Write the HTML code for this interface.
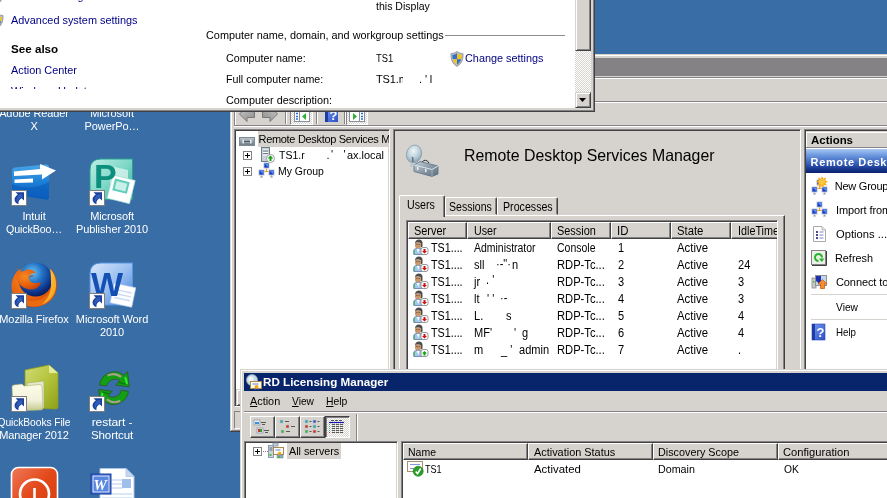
<!DOCTYPE html>
<html lang="en">
<head>
<meta charset="utf-8">
<title>Remote Desktop Services Manager</title>
<style>
html,body{margin:0;padding:0}
body{width:887px;height:498px;overflow:hidden;position:relative;background:#396da5;font-family:"Liberation Sans",sans-serif;font-size:11px;line-height:13px;color:#000;letter-spacing:-0.1px}
div,span,svg{position:absolute;box-sizing:border-box}
#root{left:0;top:0;width:887px;height:498px;overflow:hidden;will-change:transform}
svg{overflow:visible}
.t{white-space:nowrap;height:13px;transform-origin:0 0}
.b{font-weight:bold}
.lk{color:#000084}
.w{color:#fff}
.ms{font-size:12px;letter-spacing:0;transform:scaleX(.92)}
.lbl{color:#fff;text-align:center;width:90px;white-space:nowrap;height:13px;transform-origin:50% 0}
.btn{background:#d6d3ce;border:1px solid;border-color:#fff #424142 #424142 #fff;box-shadow:inset -1px -1px 0 #848284}
.sbtn{background:#d6d3ce;border:1px solid;border-color:#d6d3ce #424142 #424142 #d6d3ce;box-shadow:inset 1px 1px 0 #fff,inset -1px -1px 0 #848284}
.sunk{border:1px solid;border-color:#848284 #fff #fff #848284;box-shadow:inset 1px 1px 0 #424142,inset -1px -1px 0 #d6d3ce}
.hd{background:#d6d3ce;border:1px solid;border-color:#fff #424142 #424142 #fff;box-shadow:inset -1px -1px 0 #848284}
.plus{width:9px;height:9px;border:1px solid #848284;background:#fff}
.plus:before{content:"";position:absolute;left:1px;top:3px;width:5px;height:1px;background:#000}
.plus:after{content:"";position:absolute;left:3px;top:1px;width:1px;height:5px;background:#000}
</style>
</head>
<body>
<div id="root">
<div class="lbl" style="left:-11px;top:107px">Adobe Reader</div>
<div class="lbl" style="left:-11px;top:120px">X</div>
<div class="lbl" style="left:67px;top:107px">Microsoft</div>
<div class="lbl" style="left:67px;top:120px">PowerPo…</div>
<svg style="left:10px;top:158px" width="48" height="48" viewBox="0 0 48 48">
<defs><linearGradient id="iq" x1="0" y1="0" x2="0" y2="1"><stop offset="0" stop-color="#4aa6e8"/><stop offset=".5" stop-color="#1d7fd6"/><stop offset="1" stop-color="#0a55b0"/></linearGradient></defs>
<path d="M2 13Q2 10 5 9.5L36 6.5Q39 6.5 39 9.5V39Q39 42 36 41.5L5 36.5Q2 36 2 33z" fill="url(#iq)"/>
<path d="M2 26Q20 34 39 24V39Q39 42 36 41.5L5 36.5Q2 36 2 33z" fill="#0b5fc0" opacity=".7"/>
<path d="M4 13.5L30 11V6L46 12.5L32 21.5V16.5L4 18z" fill="#fff"/>
<path d="M4.5 21.5L23 20.5V24.5L4.5 25z" fill="#fff"/>
</svg>
<svg style="left:11px;top:190px" width="16" height="16" viewBox="0 0 16 16"><rect x=".5" y=".5" width="15" height="15" fill="#fff" stroke="#7f7f7f"/><path d="M4.500 2.300H13V10.500L10.700 8.200C8.500 9.500 7 11 7.500 14C4.500 13.500 2.500 10 4 7.500C4.800 6.200 5.800 5.400 6.800 4.600z" fill="#1c3f98"/><path d="M8 4.500L11.500 4V7.500C9 8 6.500 10 6 12.500C4.500 10 6 6.500 8 4.500z" fill="#2f5cb8"/><path d="M3.200 8.500C2.800 10.500 3.800 12.500 5.500 13.500" stroke="#c8daf4" stroke-width=".8" fill="none"/></svg><div class="lbl" style="left:-11px;top:210px">Intuit</div>
<div class="lbl" style="left:-11px;top:223px;transform:scaleX(0.97)">QuickBoo…</div>
<svg style="left:88px;top:158px" width="48" height="48" viewBox="0 0 48 48">
<defs><linearGradient id="pb" x1="0" y1="0" x2="1" y2="1"><stop offset="0" stop-color="#bfeee4"/><stop offset=".5" stop-color="#7fd8c8"/><stop offset="1" stop-color="#2fae9a"/></linearGradient></defs>
<path d="M2 12Q2 1 13 1H44.5V41.5H2z" fill="url(#pb)" stroke="#28a090" stroke-width="1"/>
<path d="M22 8L40 12V30L22 30z" fill="#d8f4ee" opacity=".8"/>
<g transform="rotate(14 32 30)"><rect x="22" y="19" width="23" height="24" fill="#fff" stroke="#9adccf" stroke-width=".6"/><rect x="25" y="22" width="15" height="12" fill="#5fcdb9"/><rect x="27" y="24" width="11" height="8" fill="#c9f1ea"/></g>
<text x="6" y="30" font-family="Liberation Sans,sans-serif" font-weight="bold" font-size="34" fill="#0c8f7c" letter-spacing="0">P</text>
</svg>
<svg style="left:89px;top:190px" width="16" height="16" viewBox="0 0 16 16"><rect x=".5" y=".5" width="15" height="15" fill="#fff" stroke="#7f7f7f"/><path d="M4.500 2.300H13V10.500L10.700 8.200C8.500 9.500 7 11 7.500 14C4.500 13.500 2.500 10 4 7.500C4.800 6.200 5.800 5.400 6.800 4.600z" fill="#1c3f98"/><path d="M8 4.500L11.500 4V7.500C9 8 6.500 10 6 12.500C4.500 10 6 6.500 8 4.500z" fill="#2f5cb8"/><path d="M3.200 8.500C2.800 10.500 3.800 12.500 5.500 13.500" stroke="#c8daf4" stroke-width=".8" fill="none"/></svg><div class="lbl" style="left:67px;top:210px">Microsoft</div>
<div class="lbl" style="left:67px;top:223px">Publisher 2010</div>
<svg style="left:10px;top:261px" width="48" height="48" viewBox="0 0 48 48">
<defs><radialGradient id="fg" cx=".4" cy=".3" r=".75"><stop offset="0" stop-color="#6fc4f0"/><stop offset=".4" stop-color="#2374c8"/><stop offset=".8" stop-color="#0c2f86"/><stop offset="1" stop-color="#08184c"/></radialGradient>
<radialGradient id="ff" cx=".35" cy=".35" r=".8"><stop offset="0" stop-color="#f58a24"/><stop offset=".55" stop-color="#e8600c"/><stop offset="1" stop-color="#c43c08"/></radialGradient>
<linearGradient id="fy" x1="0" y1="0" x2="1" y2="1"><stop offset="0" stop-color="#fbd848"/><stop offset="1" stop-color="#f49a18"/></linearGradient></defs>
<path d="M5.500 5.500C7 8 8 8.500 9.500 8C5 12 1.500 18 1.500 25C1.500 37 11 46 24 46C37 46 47 36.500 47 24C47 17 44.500 11 40 7.500C42 12 42 15 41 18C38 10 31 4 24 4C18 4 13 6 10 9.500C8 9 6.500 7.500 5.500 5.500z" fill="url(#ff)"/>
<circle cx="25.500" cy="18.500" r="17" fill="url(#fg)"/>
<path d="M8 10C11 11 13 10.500 15 9.500C19 7.500 24 9 25.500 12C22 12 19.500 13.500 19 16C18.500 19 20.500 21.500 24 22C27 22.500 29.500 21 31 21.500C29.500 26 25 29 20 28.500C13 28 7.500 23 6.500 17C6 14 6.500 12 8 10z" fill="url(#ff)"/>
<path d="M3 27C6 35 13 40 22 40C31 40 38 35 41.500 27C43 23 43 19 42 16C45 20 46.500 25 45.500 30C44 38 36 45.500 24 45.500C13 45.500 4.500 38 3 27z" fill="#ea6a10"/>
<path d="M40 8C44 12 46.500 18 46 25C45.500 33 40 40 32 43.500C38 38 41 31 41 24C41 18 41 13 40 8z" fill="url(#fy)"/>
<path d="M19 16.500C20 15 22 14.500 23.500 15" stroke="#7a2a04" stroke-width=".8" fill="none"/>
</svg>
<svg style="left:11px;top:293px" width="16" height="16" viewBox="0 0 16 16"><rect x=".5" y=".5" width="15" height="15" fill="#fff" stroke="#7f7f7f"/><path d="M4.500 2.300H13V10.500L10.700 8.200C8.500 9.500 7 11 7.500 14C4.500 13.500 2.500 10 4 7.500C4.800 6.200 5.800 5.400 6.800 4.600z" fill="#1c3f98"/><path d="M8 4.500L11.500 4V7.500C9 8 6.500 10 6 12.500C4.500 10 6 6.500 8 4.500z" fill="#2f5cb8"/><path d="M3.200 8.500C2.800 10.500 3.800 12.500 5.500 13.500" stroke="#c8daf4" stroke-width=".8" fill="none"/></svg><div class="lbl" style="left:-11px;top:313px">Mozilla Firefox</div>
<svg style="left:88px;top:261px" width="48" height="48" viewBox="0 0 48 48">
<defs><linearGradient id="wb" x1="0" y1="0" x2="1" y2="1"><stop offset="0" stop-color="#d6e6fa"/><stop offset=".5" stop-color="#9cc0f0"/><stop offset="1" stop-color="#3f7fdc"/></linearGradient></defs>
<path d="M2 13Q2 2 13 2H44.5V44H2z" fill="url(#wb)" stroke="#5a94e4" stroke-width="1"/>
<g transform="rotate(12 34 34)"><rect x="24" y="24" width="22" height="20" fill="#fff" stroke="#b7cff0" stroke-width=".6"/><path d="M27 30h16M27 34h16M27 38h16" stroke="#c9dbf4" stroke-width="1.4"/></g>
<text x="3" y="35" font-family="Liberation Sans,sans-serif" font-weight="bold" font-size="34" fill="#1450b4" letter-spacing="0">W</text>
</svg>
<svg style="left:89px;top:293px" width="16" height="16" viewBox="0 0 16 16"><rect x=".5" y=".5" width="15" height="15" fill="#fff" stroke="#7f7f7f"/><path d="M4.500 2.300H13V10.500L10.700 8.200C8.500 9.500 7 11 7.500 14C4.500 13.500 2.500 10 4 7.500C4.800 6.200 5.800 5.400 6.800 4.600z" fill="#1c3f98"/><path d="M8 4.500L11.500 4V7.500C9 8 6.500 10 6 12.500C4.500 10 6 6.500 8 4.500z" fill="#2f5cb8"/><path d="M3.200 8.500C2.800 10.500 3.800 12.500 5.500 13.500" stroke="#c8daf4" stroke-width=".8" fill="none"/></svg><div class="lbl" style="left:67px;top:313px">Microsoft Word</div>
<div class="lbl" style="left:67px;top:326px">2010</div>
<svg style="left:10px;top:364px" width="48" height="48" viewBox="0 0 48 48">
<defs><linearGradient id="qg" x1="0" y1="0" x2="1" y2="1"><stop offset="0" stop-color="#d2dc78"/><stop offset=".5" stop-color="#b4c43c"/><stop offset="1" stop-color="#8ea018"/></linearGradient>
<linearGradient id="qw" x1="0" y1="0" x2="0" y2="1"><stop offset="0" stop-color="#fbfbe8"/><stop offset=".6" stop-color="#f2f2dc"/><stop offset="1" stop-color="#bfc98a"/></linearGradient></defs>
<path d="M15 6L39 1L48 9V43Q48 45 46 45L17 44Q15 44 15 42z" fill="url(#qg)" stroke="#8c9c20" stroke-width=".8"/>
<path d="M39 1V9H48z" fill="#e4ec9c"/>
<path d="M17 19L34 17V44L19 45z" fill="#e6e9c8" stroke="#a0aa60" stroke-width=".6"/>
<path d="M2 23Q2 21 4 21L12 20L14 22L30 20.5Q32 20.5 32 23L33 44Q33 46 31 46L5 47Q3 47 3 45z" fill="url(#qw)" stroke="#aab070" stroke-width=".6"/>
</svg>
<svg style="left:11px;top:396px" width="16" height="16" viewBox="0 0 16 16"><rect x=".5" y=".5" width="15" height="15" fill="#fff" stroke="#7f7f7f"/><path d="M4.500 2.300H13V10.500L10.700 8.200C8.500 9.500 7 11 7.500 14C4.500 13.500 2.500 10 4 7.500C4.800 6.200 5.800 5.400 6.800 4.600z" fill="#1c3f98"/><path d="M8 4.500L11.500 4V7.500C9 8 6.500 10 6 12.500C4.500 10 6 6.500 8 4.500z" fill="#2f5cb8"/><path d="M3.200 8.500C2.800 10.500 3.800 12.500 5.500 13.500" stroke="#c8daf4" stroke-width=".8" fill="none"/></svg><div class="lbl" style="left:-11px;top:416px;transform:scaleX(0.935)">QuickBooks File</div>
<div class="lbl" style="left:-11px;top:429px">Manager 2012</div>
<svg style="left:88px;top:364px" width="48" height="48" viewBox="0 0 48 48">
<g transform="translate(3.500 3) scale(.9)">
<path d="M9 20C10 11 18 4.500 28 5.500C31 6 34 7.500 36 9.500L40 5L42 22L27 20L31.500 15C29 13 25 13 22 14.500C19 16 17.500 18.500 17 21z" fill="#12a012" stroke="#2c5c24" stroke-width="1"/>
<path d="M41 27C40 36 32 42.500 22 41.500C19 41 16 39.500 14 37.500L10 42L8 25L23 27L18.500 32C21 34 25 34 28 32.500C31 31 32.500 28.500 33 26z" fill="#12a012" stroke="#2c5c24" stroke-width="1"/>
<path d="M18 9.500C23 7 29 8 33 11" stroke="#a8a08c" stroke-width="2.400" fill="none"/><path d="M32 37.500C27 40 21 39 17 36" stroke="#a8a08c" stroke-width="2.400" fill="none"/>
<path d="M37.500 11L39.500 19" stroke="#38e838" stroke-width="2.200"/><path d="M12.500 28L10.500 36" stroke="#38e838" stroke-width="2.200"/>
<path d="M30 17L38 19" stroke="#0c780c" stroke-width="1.500"/><path d="M20 30L12 28" stroke="#0c780c" stroke-width="1.500"/>
</g></svg>
<svg style="left:89px;top:396px" width="16" height="16" viewBox="0 0 16 16"><rect x=".5" y=".5" width="15" height="15" fill="#fff" stroke="#7f7f7f"/><path d="M4.500 2.300H13V10.500L10.700 8.200C8.500 9.500 7 11 7.500 14C4.500 13.500 2.500 10 4 7.500C4.800 6.200 5.800 5.400 6.800 4.600z" fill="#1c3f98"/><path d="M8 4.500L11.500 4V7.500C9 8 6.500 10 6 12.500C4.500 10 6 6.500 8 4.500z" fill="#2f5cb8"/><path d="M3.200 8.500C2.800 10.500 3.800 12.500 5.500 13.500" stroke="#c8daf4" stroke-width=".8" fill="none"/></svg><div class="lbl" style="left:67px;top:416px;transform:scaleX(1.1)">restart -</div>
<div class="lbl" style="left:67px;top:429px;transform:scaleX(1.05)">Shortcut</div>
<svg style="left:10px;top:466px" width="50" height="40" viewBox="0 0 50 40">
<defs><linearGradient id="pw" x1="0" y1="0" x2="1" y2="1"><stop offset="0" stop-color="#f0785a"/><stop offset=".5" stop-color="#e24818"/><stop offset="1" stop-color="#d43c10"/></linearGradient></defs>
<rect x="1.5" y="1.5" width="46" height="46" rx="7" fill="url(#pw)" stroke="#fff" stroke-width="1.6"/>
<circle cx="24.500" cy="28" r="14.500" fill="none" stroke="#fff" stroke-width="2.6"/>
<path d="M24.500 22V36" stroke="#fff" stroke-width="2.6"/>
</svg>
<svg style="left:88px;top:466px" width="48" height="40" viewBox="0 0 48 40">
<path d="M12 2.500H38L46 10.500V40H12z" fill="#fff" stroke="#a9c4e8" stroke-width="1"/>
<path d="M38 2.500V10.500H46z" fill="#c4d8f0" stroke="#a9c4e8" stroke-width=".8"/>
<path d="M24 14h11M24 18h11M24 22h11M14 28h30M14 32h30" stroke="#b4cdee" stroke-width="1.2"/>
<rect x="34" y="13" width="9" height="9" fill="#9fc0ea"/>
<rect x="3" y="8" width="20" height="20" fill="#3a6ad0" stroke="#1e3fa0" stroke-width="1"/>
<rect x="5" y="10" width="16" height="16" fill="#5a88e0" stroke="#fff" stroke-width=".8"/>
<text x="5.500" y="24" font-family="Liberation Serif,serif" font-weight="bold" font-style="italic" font-size="15" fill="#fff" letter-spacing="0">W</text>
</svg>

<div style="left:230px;top:54px;width:700px;height:378px;background:#d6d3ce">
<div style="left:1px;top:1px;width:700px;height:1px;background:#fff"></div>
<div style="left:1px;top:1px;width:1px;height:376px;background:#fff"></div>
<div style="left:1px;top:376px;width:700px;height:1px;background:#848284"></div>
<div style="left:0px;top:377px;width:700px;height:1px;background:#424142"></div>
<div style="left:4px;top:4px;width:700px;height:18px;background:#848284"></div>
<div style="left:4px;top:23px;width:700px;height:1px;background:#848284"></div>
<div style="left:5px;top:24px;width:700px;height:1px;background:#fff"></div>
<div style="left:4px;top:23px;width:1px;height:49px;background:#848284"></div>
<div style="left:5px;top:24px;width:1px;height:47px;background:#fff"></div>
<div style="left:6px;top:47px;width:700px;height:1px;background:#848284"></div>
<div style="left:6px;top:48px;width:700px;height:1px;background:#fff"></div>
<div style="left:4px;top:71px;width:700px;height:1px;background:#848284"></div>
<div style="left:4px;top:72px;width:700px;height:1px;background:#fff"></div>
<svg style="left:9px;top:52px" width="16" height="16" viewBox="0 0 16 16"><defs><linearGradient id="ag" x1="0" y1="0" x2="1" y2="1"><stop offset="0" stop-color="#c8c8c8"/><stop offset="1" stop-color="#8c8c8c"/></linearGradient></defs><path d="M.5 8L8 .5V4.500H15.500V11.500H8V15.500z" fill="url(#ag)" stroke="#787878" stroke-width="1"/></svg>
<svg style="left:32px;top:52px" width="16" height="16" viewBox="0 0 16 16"><g transform="translate(16 0) scale(-1 1)"><defs><linearGradient id="ag2" x1="0" y1="0" x2="1" y2="1"><stop offset="0" stop-color="#c8c8c8"/><stop offset="1" stop-color="#8c8c8c"/></linearGradient></defs><path d="M.5 8L8 .5V4.500H15.500V11.500H8V15.500z" fill="url(#ag2)" stroke="#787878" stroke-width="1"/></g></svg>
<div style="left:55px;top:58px;width:1px;height:12px;background:#848284"></div>
<div style="left:56px;top:58px;width:1px;height:12px;background:#fff"></div>
<div style="left:60px;top:50px;width:23px;height:21px;background-color:#eae8e4;background-image:conic-gradient(#fff 25%,#d6d3ce 0 50%,#fff 0 75%,#d6d3ce 0);background-size:2px 2px;border:1px solid;border-color:#848284 #fff #fff #848284"></div>
<svg style="left:64px;top:54px" width="16" height="14" viewBox="0 0 16 14"><rect x=".5" y=".5" width="15" height="13" fill="#fff" stroke="#8890a0"/><rect x="1" y="1" width="14" height="2" fill="#a8b4cc"/><path d="M5.500 3v10" stroke="#8890a0"/><path d="M2 5.500h2M2 8.500h2M2 11h2" stroke="#2c6cd8" stroke-width="1.400"/><path d="M12 5v7L8 8.500z" fill="#30b030"/></svg>
<div style="left:86px;top:58px;width:1px;height:12px;background:#848284"></div>
<div style="left:87px;top:58px;width:1px;height:12px;background:#fff"></div>
<svg style="left:95px;top:53px" width="13" height="15" viewBox="0 0 13 15"><defs><linearGradient id="hg" x1="0" y1="0" x2="1" y2="1"><stop offset="0" stop-color="#7a9cf0"/><stop offset="1" stop-color="#2a50c8"/></linearGradient></defs><rect width="13" height="15" fill="url(#hg)"/><rect width="3" height="15" fill="#1c3ca8"/><text x="4.500" y="12.500" font-family="Liberation Sans,sans-serif" font-weight="bold" font-size="13" fill="#fff" letter-spacing="0">?</text></svg>
<div style="left:114px;top:58px;width:1px;height:12px;background:#848284"></div>
<div style="left:115px;top:58px;width:1px;height:12px;background:#fff"></div>
<div style="left:116px;top:50px;width:22px;height:21px;background-color:#eae8e4;background-image:conic-gradient(#fff 25%,#d6d3ce 0 50%,#fff 0 75%,#d6d3ce 0);background-size:2px 2px;border:1px solid;border-color:#848284 #fff #fff #848284"></div>
<svg style="left:119px;top:54px" width="16" height="14" viewBox="0 0 16 14"><rect x=".5" y=".5" width="15" height="13" fill="#fff" stroke="#8890a0"/><rect x="1" y="1" width="14" height="2" fill="#a8b4cc"/><path d="M10.500 3v10" stroke="#8890a0"/><path d="M12 5.500h2M12 8.500h2M12 11h2" stroke="#2c6cd8" stroke-width="1.400"/><path d="M4 5v7L8 8.500z" fill="#30b030"/></svg>
<div class="sunk" style="left:4px;top:75px;width:156px;height:278px;background:#fff;overflow:hidden">
<div style="left:23px;top:1px;width:131px;height:16px;background:#d6d3ce"></div>
<svg style="left:4px;top:7px" width="16" height="9" viewBox="0 0 16 9"><defs><linearGradient id="rk" x1="0" y1="0" x2="0" y2="1"><stop offset="0" stop-color="#c4ccd2"/><stop offset=".45" stop-color="#8e9aa4"/><stop offset="1" stop-color="#6e7c88"/></linearGradient></defs><rect x=".5" y=".5" width="15" height="8" fill="url(#rk)" stroke="#7c8a96"/><rect x="2.500" y="3.500" width="11" height="2" fill="#a8b4bc"/><rect x="3.500" y="2.500" width="1.500" height="4" fill="#e0e6ea"/><rect x="11" y="2.500" width="1.500" height="4" fill="#e0e6ea"/><path d="M5 4.500h6" stroke="#4c5a66"/></svg>
<div class="t " style="left:23.5px;top:3px;letter-spacing:-0.31px">Remote Desktop Services Manager</div>
<div class="plus" style="left:8px;top:21px;width:9px;height:9px;"></div>
<svg style="left:26px;top:17px" width="14" height="16" viewBox="0 0 14 16"><rect x=".5" y=".5" width="8" height="14" fill="#c8d0d8" stroke="#707c88"/><path d="M2 3h5M2 5.500h5M2 8h5" stroke="#fff"/><path d="M2 4h5M2 6.500h5" stroke="#6c7884"/><circle cx="9.500" cy="11.500" r="4" fill="#fff" stroke="#8a8a8a" stroke-width=".8"/><path d="M9.500 8.500L12.500 11.500H10.500V14H8.500V11.500H6.500z" fill="#18a018"/></svg>
<div class="t " style="left:44px;top:19px;;letter-spacing:0;transform:scaleX(0.955)">TS1.r</div>
<div class="t " style="left:91.5px;top:19px;">.</div>
<div class="t " style="left:96px;top:18px;">&#39;</div>
<div class="t " style="left:108.5px;top:18px;">&#39;</div>
<div class="t " style="left:112px;top:19px;;letter-spacing:0;transform:scaleX(0.992)">ax.local</div>
<div class="plus" style="left:8px;top:37px;width:9px;height:9px;"></div>
<svg style="left:23px;top:33px" width="17" height="15" viewBox="0 0 17 15"><g><rect x="6" y="0" width="5" height="5" fill="#1c3cc8" stroke="#a8b8d0" stroke-width=".8"/><path d="M6.500 .5L10.500 4.500V.5z" fill="#5a8cf0"/><rect x="1" y="7" width="5" height="5" fill="#1c3cc8" stroke="#a8b8d0" stroke-width=".8"/><path d="M1.500 7.500L5.500 11.500V7.500z" fill="#5a8cf0"/><rect x="11" y="7" width="5" height="5" fill="#1c3cc8" stroke="#a8b8d0" stroke-width=".8"/><path d="M11.500 7.500L15.500 11.500V7.500z" fill="#5a8cf0"/><path d="M2 14h3M12 14h3M3.500 12.500v1.500M13.500 12.500v1.500" stroke="#9aa4b0"/><path d="M8.500 5.500v3M6.500 8.500h4" stroke="#f0a020" stroke-width="1.200"/></g></svg>
<div class="t " style="left:43px;top:35px;;letter-spacing:0;transform:scaleX(0.95)">My Group</div>
<div style="left:1px;top:259px;width:152px;height:17px;background-color:#eae8e4;background-image:conic-gradient(#fff 25%,#d6d3ce 0 50%,#fff 0 75%,#d6d3ce 0);background-size:2px 2px;"></div>
<div class="sbtn" style="left:1px;top:259px;width:16px;height:17px;"></div>
</div>
<div class="sunk" style="left:163px;top:75px;width:408px;height:278px;background:#d6d3ce;overflow:hidden">
<svg style="left:11px;top:14px" width="34" height="33" viewBox="0 0 34 33"><defs><radialGradient id="dg" cx=".4" cy=".35" r=".7"><stop offset="0" stop-color="#eef6fa"/><stop offset=".6" stop-color="#b8ccd8"/><stop offset="1" stop-color="#8498a8"/></radialGradient><linearGradient id="tb" x1="0" y1="0" x2="1" y2="1"><stop offset="0" stop-color="#c4ced6"/><stop offset=".5" stop-color="#8e9ca8"/><stop offset="1" stop-color="#5e6e7c"/></linearGradient></defs><ellipse cx="9" cy="10" rx="7.500" ry="9" fill="url(#dg)" stroke="#8ca0b0" stroke-width=".8" transform="rotate(18 9 10)"/><path d="M7.500 13L8 18" stroke="#5c6c7c" stroke-width="1.400"/><path d="M8 19L5.500 22.500" stroke="#a8c4d8" stroke-width="1.600"/><path d="M17 18q4-4 7 1" fill="none" stroke="#303840" stroke-width="1"/><path d="M9 21L15 17.500L33 22V30L27 32.500L9 27.500z" fill="url(#tb)" stroke="#587088" stroke-width=".8"/><path d="M9 21L27 25.500L33 22" fill="none" stroke="#dce8f0" stroke-width="1"/><path d="M27 25.500V32.500" stroke="#a8bccc" stroke-width=".8"/><rect x="12" y="23" width="1.500" height="3" fill="#e8f0f4"/><rect x="20" y="25" width="1.500" height="3" fill="#e8f0f4"/></svg>
<div class="t " style="left:70px;top:16px;font-size:16.5px;line-height:19px;height:19px;letter-spacing:0;transform:scaleX(0.962)">Remote Desktop Services Manager</div>
<div style="left:5px;top:85px;width:386px;height:200px;border:1px solid;border-color:#fff #424142 #424142 #fff;box-shadow:inset -1px -1px 0 #848284">
</div>
<div style="left:51px;top:67px;width:52px;height:18px;border:1px solid;border-color:#fff #424142 transparent #fff;border-radius:2px 2px 0 0;box-shadow:inset -1px 0 0 #848284"></div>
<div class="t ms" style="left:55.39999999999998px;top:71px;;letter-spacing:0;transform:scaleX(0.879)">Sessions</div>
<div style="left:103px;top:67px;width:61px;height:18px;border:1px solid;border-color:#fff #424142 transparent #fff;border-radius:2px 2px 0 0;box-shadow:inset -1px 0 0 #848284"></div>
<div class="t ms" style="left:108.5px;top:71px;;letter-spacing:0;transform:scaleX(0.887)">Processes</div>
<div style="left:5px;top:65px;width:46px;height:22px;background:#d6d3ce;border:1px solid;border-color:#fff #424142 #d6d3ce #fff;border-bottom:0;border-radius:2px 2px 0 0;box-shadow:inset -1px 0 0 #848284"></div>
<div class="t ms" style="left:12.5px;top:69px;;letter-spacing:0;transform:scaleX(0.89)">Users</div>
<div class="sunk" style="left:12px;top:90px;width:372px;height:200px;background:#fff;overflow:hidden">
<div class="hd" style="left:1px;top:1px;width:59px;height:17px;"></div>
<div class="t ms" style="left:6.800000000000011px;top:4px;;letter-spacing:0;transform:scaleX(0.911)">Server</div>
<div class="hd" style="left:60px;top:1px;width:84px;height:17px;"></div>
<div class="t ms" style="left:67.39999999999998px;top:4px;;letter-spacing:0;transform:scaleX(0.892)">User</div>
<div class="hd" style="left:144px;top:1px;width:60px;height:17px;"></div>
<div class="t ms" style="left:149.5px;top:4px;;letter-spacing:0;transform:scaleX(0.911)">Session</div>
<div class="hd" style="left:204px;top:1px;width:60px;height:17px;"></div>
<div class="t ms" style="left:209.5px;top:4px;;letter-spacing:0;transform:scaleX(0.95)">ID</div>
<div class="hd" style="left:264px;top:1px;width:60px;height:17px;"></div>
<div class="t ms" style="left:269.5px;top:4px;;letter-spacing:0;transform:scaleX(0.942)">State</div>
<div class="hd" style="left:324px;top:1px;width:60px;height:17px;"></div>
<div class="t ms" style="left:330.5px;top:4px;;letter-spacing:0;transform:scaleX(0.9)">IdleTime</div>
<svg style="left:6px;top:18px" width="16" height="16" viewBox="0 0 16 16"><path d="M2 4Q2.500 .5 6 .5Q9 .5 9.500 3.500L9.500 7.500L8 8.500V4.500Q6 3 2 4z" fill="#4c4c4c"/><path d="M2 4Q6 3 8 4.500V8Q7 10 5 10Q2.500 10 2 7z" fill="#c8966c"/><path d="M3 5.500h1.500M5.500 5.500h1.500" stroke="#6a4a30" stroke-width=".7"/><path d="M.8 15.500V12Q.8 9.500 3.500 9.500H7Q9.500 9.500 9.500 12V15.500z" fill="#a4c8ec" stroke="#5c7ca4" stroke-width=".8"/><path d="M3.800 9.800L5.200 14L6.600 9.800z" fill="#fff"/><path d="M1.200 11v4" stroke="#38a838" stroke-width=".8"/><rect x="8" y="8.500" width="7" height="7" rx="2" fill="#fff" stroke="#8c8c8c" stroke-width=".9"/><path d="M10.500 10h2v2h1.500L11.500 14.500L9 12h1.500z" fill="#d01010"/></svg>
<div class="t ms" style="left:23.600000000000023px;top:21px;;letter-spacing:0;transform:scaleX(0.894)">TS1....</div>
<div class="t ms" style="left:66.80000000000001px;top:21px;;letter-spacing:0;transform:scaleX(0.871)">Administrator</div>
<div class="t ms" style="left:150px;top:21px;;letter-spacing:0;transform:scaleX(0.874)">Console</div>
<div class="t ms" style="left:210.5px;top:21px;">1</div>
<div class="t ms" style="left:269.9px;top:21px;;letter-spacing:0;transform:scaleX(0.948)">Active</div>
<svg style="left:6px;top:35px" width="16" height="16" viewBox="0 0 16 16"><path d="M2 4Q2.500 .5 6 .5Q9 .5 9.500 3.500L9.500 7.500L8 8.500V4.500Q6 3 2 4z" fill="#4c4c4c"/><path d="M2 4Q6 3 8 4.500V8Q7 10 5 10Q2.500 10 2 7z" fill="#c8966c"/><path d="M3 5.500h1.500M5.500 5.500h1.500" stroke="#6a4a30" stroke-width=".7"/><path d="M.8 15.500V12Q.8 9.500 3.500 9.500H7Q9.500 9.500 9.500 12V15.500z" fill="#a4c8ec" stroke="#5c7ca4" stroke-width=".8"/><path d="M3.800 9.800L5.200 14L6.600 9.800z" fill="#fff"/><path d="M1.200 11v4" stroke="#38a838" stroke-width=".8"/><rect x="8" y="8.500" width="7" height="7" rx="2" fill="#fff" stroke="#8c8c8c" stroke-width=".9"/><path d="M10.500 10h2v2h1.500L11.500 14.500L9 12h1.500z" fill="#d01010"/></svg>
<div class="t ms" style="left:23.600000000000023px;top:38px;;letter-spacing:0;transform:scaleX(0.894)">TS1....</div>
<div class="t ms" style="left:66.80000000000001px;top:38px;">sll</div>
<div class="t ms" style="left:89px;top:37px;">&#183;-&quot;&#183;</div>
<div class="t ms" style="left:105px;top:38px;">n</div>
<div class="t ms" style="left:149.5px;top:38px;;letter-spacing:0;transform:scaleX(0.931)">RDP-Tc...</div>
<div class="t ms" style="left:210.5px;top:38px;">2</div>
<div class="t ms" style="left:269.9px;top:38px;;letter-spacing:0;transform:scaleX(0.948)">Active</div>
<div class="t ms" style="left:330.5px;top:38px;;letter-spacing:0;transform:scaleX(0.921)">24</div>
<svg style="left:6px;top:52px" width="16" height="16" viewBox="0 0 16 16"><path d="M2 4Q2.500 .5 6 .5Q9 .5 9.500 3.500L9.500 7.500L8 8.500V4.500Q6 3 2 4z" fill="#4c4c4c"/><path d="M2 4Q6 3 8 4.500V8Q7 10 5 10Q2.500 10 2 7z" fill="#c8966c"/><path d="M3 5.500h1.500M5.500 5.500h1.500" stroke="#6a4a30" stroke-width=".7"/><path d="M.8 15.500V12Q.8 9.500 3.500 9.500H7Q9.500 9.500 9.500 12V15.500z" fill="#a4c8ec" stroke="#5c7ca4" stroke-width=".8"/><path d="M3.800 9.800L5.200 14L6.600 9.800z" fill="#fff"/><path d="M1.200 11v4" stroke="#38a838" stroke-width=".8"/><rect x="8" y="8.500" width="7" height="7" rx="2" fill="#fff" stroke="#8c8c8c" stroke-width=".9"/><path d="M10.500 10h2v2h1.500L11.500 14.500L9 12h1.500z" fill="#d01010"/></svg>
<div class="t ms" style="left:23.600000000000023px;top:55px;;letter-spacing:0;transform:scaleX(0.894)">TS1....</div>
<div class="t ms" style="left:66.80000000000001px;top:55px;">jr</div>
<div class="t ms" style="left:79px;top:53px;">. &#39;</div>
<div class="t ms" style="left:149.5px;top:55px;;letter-spacing:0;transform:scaleX(0.931)">RDP-Tc...</div>
<div class="t ms" style="left:210.5px;top:55px;">3</div>
<div class="t ms" style="left:269.9px;top:55px;;letter-spacing:0;transform:scaleX(0.948)">Active</div>
<div class="t ms" style="left:330.5px;top:55px;">3</div>
<svg style="left:6px;top:69px" width="16" height="16" viewBox="0 0 16 16"><path d="M2 4Q2.500 .5 6 .5Q9 .5 9.500 3.500L9.500 7.500L8 8.500V4.500Q6 3 2 4z" fill="#4c4c4c"/><path d="M2 4Q6 3 8 4.500V8Q7 10 5 10Q2.500 10 2 7z" fill="#c8966c"/><path d="M3 5.500h1.500M5.500 5.500h1.500" stroke="#6a4a30" stroke-width=".7"/><path d="M.8 15.500V12Q.8 9.500 3.500 9.500H7Q9.500 9.500 9.500 12V15.500z" fill="#a4c8ec" stroke="#5c7ca4" stroke-width=".8"/><path d="M3.800 9.800L5.200 14L6.600 9.800z" fill="#fff"/><path d="M1.200 11v4" stroke="#38a838" stroke-width=".8"/><rect x="8" y="8.500" width="7" height="7" rx="2" fill="#fff" stroke="#8c8c8c" stroke-width=".9"/><path d="M10.500 10h2v2h1.500L11.500 14.500L9 12h1.500z" fill="#d01010"/></svg>
<div class="t ms" style="left:23.600000000000023px;top:72px;;letter-spacing:0;transform:scaleX(0.894)">TS1....</div>
<div class="t ms" style="left:66.80000000000001px;top:72px;">lt</div>
<div class="t ms" style="left:80px;top:72px;">&#39; &#39;</div>
<div class="t ms" style="left:93px;top:71px;">&#183;-</div>
<div class="t ms" style="left:149.5px;top:72px;;letter-spacing:0;transform:scaleX(0.931)">RDP-Tc...</div>
<div class="t ms" style="left:210.5px;top:72px;">4</div>
<div class="t ms" style="left:269.9px;top:72px;;letter-spacing:0;transform:scaleX(0.948)">Active</div>
<div class="t ms" style="left:330.5px;top:72px;">3</div>
<svg style="left:6px;top:86px" width="16" height="16" viewBox="0 0 16 16"><path d="M2 4Q2.500 .5 6 .5Q9 .5 9.500 3.500L9.500 7.500L8 8.500V4.500Q6 3 2 4z" fill="#4c4c4c"/><path d="M2 4Q6 3 8 4.500V8Q7 10 5 10Q2.500 10 2 7z" fill="#c8966c"/><path d="M3 5.500h1.500M5.500 5.500h1.500" stroke="#6a4a30" stroke-width=".7"/><path d="M.8 15.500V12Q.8 9.500 3.500 9.500H7Q9.500 9.500 9.500 12V15.500z" fill="#a4c8ec" stroke="#5c7ca4" stroke-width=".8"/><path d="M3.800 9.800L5.200 14L6.600 9.800z" fill="#fff"/><path d="M1.200 11v4" stroke="#38a838" stroke-width=".8"/><rect x="8" y="8.500" width="7" height="7" rx="2" fill="#fff" stroke="#8c8c8c" stroke-width=".9"/><path d="M10.500 10h2v2h1.500L11.500 14.500L9 12h1.500z" fill="#d01010"/></svg>
<div class="t ms" style="left:23.600000000000023px;top:89px;;letter-spacing:0;transform:scaleX(0.894)">TS1....</div>
<div class="t ms" style="left:66.80000000000001px;top:89px;">L.</div>
<div class="t ms" style="left:99px;top:89px;">s</div>
<div class="t ms" style="left:149.5px;top:89px;;letter-spacing:0;transform:scaleX(0.931)">RDP-Tc...</div>
<div class="t ms" style="left:210.5px;top:89px;">5</div>
<div class="t ms" style="left:269.9px;top:89px;;letter-spacing:0;transform:scaleX(0.948)">Active</div>
<div class="t ms" style="left:330.5px;top:89px;">4</div>
<svg style="left:6px;top:103px" width="16" height="16" viewBox="0 0 16 16"><path d="M2 4Q2.500 .5 6 .5Q9 .5 9.500 3.500L9.500 7.500L8 8.500V4.500Q6 3 2 4z" fill="#4c4c4c"/><path d="M2 4Q6 3 8 4.500V8Q7 10 5 10Q2.500 10 2 7z" fill="#c8966c"/><path d="M3 5.500h1.500M5.500 5.500h1.500" stroke="#6a4a30" stroke-width=".7"/><path d="M.8 15.500V12Q.8 9.500 3.500 9.500H7Q9.500 9.500 9.500 12V15.500z" fill="#a4c8ec" stroke="#5c7ca4" stroke-width=".8"/><path d="M3.800 9.800L5.200 14L6.600 9.800z" fill="#fff"/><path d="M1.200 11v4" stroke="#38a838" stroke-width=".8"/><rect x="8" y="8.500" width="7" height="7" rx="2" fill="#fff" stroke="#8c8c8c" stroke-width=".9"/><path d="M10.500 10h2v2h1.500L11.500 14.500L9 12h1.500z" fill="#d01010"/></svg>
<div class="t ms" style="left:23.600000000000023px;top:106px;;letter-spacing:0;transform:scaleX(0.894)">TS1....</div>
<div class="t ms" style="left:66.80000000000001px;top:106px;">MF&#39;</div>
<div class="t ms" style="left:106.5px;top:106px;">&#39;</div>
<div class="t ms" style="left:115px;top:106px;">g</div>
<div class="t ms" style="left:149.5px;top:106px;;letter-spacing:0;transform:scaleX(0.931)">RDP-Tc...</div>
<div class="t ms" style="left:210.5px;top:106px;">6</div>
<div class="t ms" style="left:269.9px;top:106px;;letter-spacing:0;transform:scaleX(0.948)">Active</div>
<div class="t ms" style="left:330.5px;top:106px;">4</div>
<svg style="left:6px;top:120px" width="16" height="16" viewBox="0 0 16 16"><path d="M2 4Q2.500 .5 6 .5Q9 .5 9.500 3.500L9.500 7.500L8 8.500V4.500Q6 3 2 4z" fill="#4c4c4c"/><path d="M2 4Q6 3 8 4.500V8Q7 10 5 10Q2.500 10 2 7z" fill="#c8966c"/><path d="M3 5.500h1.500M5.500 5.500h1.500" stroke="#6a4a30" stroke-width=".7"/><path d="M.8 15.500V12Q.8 9.500 3.500 9.500H7Q9.500 9.500 9.500 12V15.500z" fill="#a4c8ec" stroke="#5c7ca4" stroke-width=".8"/><path d="M3.800 9.800L5.200 14L6.600 9.800z" fill="#fff"/><path d="M1.200 11v4" stroke="#38a838" stroke-width=".8"/><rect x="8" y="8.500" width="7" height="7" rx="2" fill="#fff" stroke="#8c8c8c" stroke-width=".9"/><path d="M10.500 14.500h2v-2h1.500L11.500 10L9 12.500h1.500z" fill="#10a010"/></svg>
<div class="t ms" style="left:23.600000000000023px;top:123px;;letter-spacing:0;transform:scaleX(0.894)">TS1....</div>
<div class="t ms" style="left:66.80000000000001px;top:123px;">m</div>
<div class="t ms" style="left:94px;top:123px;">_ &#39;</div>
<div class="t ms" style="left:111.70000000000005px;top:123px;">admin</div>
<div class="t ms" style="left:149.5px;top:123px;;letter-spacing:0;transform:scaleX(0.931)">RDP-Tc...</div>
<div class="t ms" style="left:210.5px;top:123px;">7</div>
<div class="t ms" style="left:269.9px;top:123px;;letter-spacing:0;transform:scaleX(0.948)">Active</div>
<div class="t ms" style="left:330.5px;top:123px;">.</div>
</div>
</div>
<div class="sunk" style="left:574px;top:75px;width:200px;height:278px;background:#fff;overflow:hidden">
<div style="left:1px;top:1px;width:200px;height:16px;background:#d6d3ce"></div>
<div style="left:1px;top:2px;width:200px;height:1px;background:#fff"></div>
<div style="left:1px;top:2px;width:1px;height:15px;background:#fff"></div>
<div style="left:1px;top:17px;width:200px;height:1px;background:#848284"></div>
<div class="t b" style="left:6px;top:4px;;letter-spacing:0;transform:scaleX(1.041)">Actions</div>
<div style="left:1px;top:19px;width:200px;height:24px;background:linear-gradient(#a9c8f2 0%,#6f9ae0 25%,#3f68c0 55%,#16348c 85%,#08246b 100%)"></div>
<div class="t b w" style="left:5.600000000000023px;top:26px;letter-spacing:0.62px">Remote Desktop Services Manager</div>
<svg style="left:6px;top:48px" width="17" height="15" viewBox="0 0 17 15"><g transform="translate(0 2)"><rect x="6" y="0" width="5" height="5" fill="#1c3cc8" stroke="#a8b8d0" stroke-width=".8"/><path d="M6.500 .5L10.500 4.500V.5z" fill="#5a8cf0"/><rect x="1" y="7" width="5" height="5" fill="#1c3cc8" stroke="#a8b8d0" stroke-width=".8"/><path d="M1.500 7.500L5.500 11.500V7.500z" fill="#5a8cf0"/><rect x="11" y="7" width="5" height="5" fill="#1c3cc8" stroke="#a8b8d0" stroke-width=".8"/><path d="M11.500 7.500L15.500 11.500V7.500z" fill="#5a8cf0"/><path d="M2 14h3M12 14h3M3.500 12.500v1.500M13.500 12.500v1.500" stroke="#9aa4b0"/><path d="M8.500 5.500v3M6.500 8.500h4" stroke="#f0a020" stroke-width="1.200"/></g><g transform="translate(5 -2)"><path d="M6 0l1.200 2.800L10 1.500 9.300 4.500 12 5.500 9.500 7 11 9.500 8 9 7.500 12 6 9.500 4.500 12 4 9 1 9.500 2.500 7 0 5.500 2.700 4.500 2 1.500 4.800 2.800z" fill="#f8a818"/><circle cx="6" cy="6" r="3" fill="#f8c840"/></g></svg>
<div class="t " style="left:29.799999999999955px;top:50px;letter-spacing:-0.25px">New Group</div>
<svg style="left:6px;top:72px" width="17" height="15" viewBox="0 0 17 15"><g><rect x="6" y="0" width="5" height="5" fill="#1c3cc8" stroke="#a8b8d0" stroke-width=".8"/><path d="M6.500 .5L10.500 4.500V.5z" fill="#5a8cf0"/><rect x="1" y="7" width="5" height="5" fill="#1c3cc8" stroke="#a8b8d0" stroke-width=".8"/><path d="M1.500 7.500L5.500 11.500V7.500z" fill="#5a8cf0"/><rect x="11" y="7" width="5" height="5" fill="#1c3cc8" stroke="#a8b8d0" stroke-width=".8"/><path d="M11.500 7.500L15.500 11.500V7.500z" fill="#5a8cf0"/><path d="M2 14h3M12 14h3M3.500 12.500v1.500M13.500 12.500v1.500" stroke="#9aa4b0"/><path d="M8.500 5.500v3M6.500 8.500h4" stroke="#f0a020" stroke-width="1.200"/></g></svg>
<div class="t " style="left:31px;top:74px;">Import from</div>
<svg style="left:8px;top:96px" width="13" height="16" viewBox="0 0 13 16"><path d="M.5 .5H9L12.500 4V15.500H.5z" fill="#fff" stroke="#a8a8a8"/><path d="M9 .5V4H12.500" fill="#e8e8e8" stroke="#a8a8a8" stroke-width=".8"/><path d="M3 6h2M3 9h2M3 12h2" stroke="#101060" stroke-width="1.600"/><path d="M6.500 6h4M6.500 9h4M6.500 12h4" stroke="#8080c0" stroke-width="1"/></svg>
<div class="t " style="left:31px;top:98px;;letter-spacing:0;transform:scaleX(1.017)">Options ...</div>
<svg style="left:6px;top:120px" width="16" height="16" viewBox="0 0 16 16"><rect x=".5" y=".5" width="14" height="14" fill="#e8f0e8" stroke="#848284"/><path d="M1 15.500H15.500V1" fill="none" stroke="#424142"/><path d="M11 7.500A3.500 3.500 0 1 0 7.500 11" fill="none" stroke="#28b428" stroke-width="2"/><path d="M8 8.500h5.500L10.800 12z" fill="#28b428"/></svg>
<div class="t " style="left:30.399999999999977px;top:122px;;letter-spacing:0;transform:scaleX(0.986)">Refresh</div>
<svg style="left:6px;top:144px" width="17" height="16" viewBox="0 0 17 16"><rect x="1" y="4" width="4" height="10" fill="#c8c8c8" stroke="#8c8c8c" stroke-width=".8"/><rect x="2" y="7" width="1.500" height="1.500" fill="#30d030"/><rect x="4.500" y="1.500" width="11" height="10" fill="#c0d8f4" stroke="#909090"/><path d="M5 2L10 2L10 11L5 7z" fill="#1c30b0"/><path d="M11.500 5.500L16 10H13.500V14.500H9.500V10H7z" fill="#f88c30" stroke="#d05c10" stroke-width=".8"/></svg>
<div class="t " style="left:31px;top:146px;">Connect to Computer</div>
<div style="left:6px;top:164px;width:100px;height:1px;background:#d6d3ce"></div>
<div class="t " style="left:31px;top:171px;;letter-spacing:0;transform:scaleX(0.93)">View</div>
<div style="left:6px;top:189px;width:100px;height:1px;background:#d6d3ce"></div>
<svg style="left:7px;top:194px" width="13" height="16" viewBox="0 0 13 16"><defs><linearGradient id="hg2" x1="0" y1="0" x2="1" y2="1"><stop offset="0" stop-color="#7a9cf0"/><stop offset="1" stop-color="#2a50c8"/></linearGradient></defs><rect width="13" height="16" fill="url(#hg2)" stroke="#2848b0" stroke-width=".6"/><rect width="3" height="16" fill="#1c3ca8"/><text x="4.500" y="13" font-family="Liberation Sans,sans-serif" font-weight="bold" font-size="13" fill="#fff" letter-spacing="0">?</text></svg>
<div class="t " style="left:31px;top:196px;;letter-spacing:0;transform:scaleX(0.884)">Help</div>
</div>
<div style="left:4px;top:357px;width:200px;height:18px;border:1px solid;border-color:#848284 #fff #fff #848284"></div>
</div>
<div style="left:-50px;top:-50px;width:645px;height:162px;background:#d6d3ce;border:1px solid;border-color:#d6d3ce #424142 #424142 #d6d3ce;box-shadow:inset -1px -1px 0 #848284">
<div style="left:49px;top:49px;width:575px;height:108px;background:#fff;overflow:hidden">
<svg style="left:-10px;top:-11px" width="14" height="16" viewBox="0 0 14 16"><path d="M7 .5C5 2 3 2.5 1 2.5 0.7 8 2 12.5 7 15.5 12 12.5 13.3 8 13 2.5 11 2.5 9 2 7 .5z" fill="#b8bcc4" stroke="#8a8e96" stroke-width=".8"/><path d="M7 2.2C5.600 3.2 4 3.800 2.400 3.900 2.400 5.600 2.500 7 2.900 8.300H7z" fill="#2f6fd0"/><path d="M7 2.2C8.400 3.2 10 3.800 11.600 3.900 11.600 5.600 11.500 7 11.100 8.300H7z" fill="#f6c416"/><path d="M2.900 8.300C3.600 10.600 5 12.400 7 13.800V8.300z" fill="#f6c416"/><path d="M11.100 8.300C10.400 10.600 9 12.400 7 13.800V8.300z" fill="#2f6fd0"/></svg>
<svg style="left:-10px;top:13px" width="14" height="16" viewBox="0 0 14 16"><path d="M7 .5C5 2 3 2.5 1 2.5 0.7 8 2 12.5 7 15.5 12 12.5 13.3 8 13 2.5 11 2.5 9 2 7 .5z" fill="#b8bcc4" stroke="#8a8e96" stroke-width=".8"/><path d="M7 2.2C5.600 3.2 4 3.800 2.400 3.900 2.400 5.600 2.500 7 2.900 8.300H7z" fill="#2f6fd0"/><path d="M7 2.2C8.400 3.2 10 3.800 11.600 3.900 11.600 5.600 11.500 7 11.100 8.300H7z" fill="#f6c416"/><path d="M2.900 8.300C3.600 10.600 5 12.400 7 13.800V8.300z" fill="#f6c416"/><path d="M11.100 8.300C10.400 10.600 9 12.400 7 13.800V8.300z" fill="#2f6fd0"/></svg>
<div class="t lk" style="left:11px;top:-10px;">Remote settings</div>
<div class="t lk" style="left:11px;top:14px;;letter-spacing:0;transform:scaleX(0.99)">Advanced system settings</div>
<div class="t b" style="left:11px;top:43px;;letter-spacing:0;transform:scaleX(1.057)">See also</div>
<div class="t lk" style="left:11px;top:64px;;letter-spacing:0;transform:scaleX(0.99)">Action Center</div>
<div style="left:0px;top:80px;width:200px;height:9px;overflow:hidden">
<div class="t lk" style="left:11px;top:5px;">Windows Update</div>
</div>
<div class="t " style="left:376px;top:0px;;letter-spacing:0;transform:scaleX(0.958)">this Display</div>
<div class="t " style="left:205.5px;top:29px;;letter-spacing:0;transform:scaleX(0.987)">Computer name, domain, and workgroup settings</div>
<div style="left:445px;top:35px;width:120px;height:1px;background:#8c8c8c"></div>
<div class="t " style="left:225.6px;top:52px;;letter-spacing:0;transform:scaleX(0.973)">Computer name:</div>
<div class="t " style="left:376px;top:52px;;letter-spacing:0;transform:scaleX(0.852)">TS1</div>
<svg style="left:450px;top:51px" width="14" height="16" viewBox="0 0 14 16"><path d="M7 .5C5 2 3 2.5 1 2.5 0.7 8 2 12.5 7 15.5 12 12.5 13.3 8 13 2.5 11 2.5 9 2 7 .5z" fill="#b8bcc4" stroke="#8a8e96" stroke-width=".8"/><path d="M7 2.2C5.600 3.2 4 3.800 2.400 3.900 2.400 5.600 2.500 7 2.900 8.300H7z" fill="#2f6fd0"/><path d="M7 2.2C8.400 3.2 10 3.800 11.600 3.900 11.600 5.600 11.500 7 11.100 8.300H7z" fill="#f6c416"/><path d="M2.900 8.300C3.600 10.600 5 12.400 7 13.800V8.300z" fill="#f6c416"/><path d="M11.100 8.300C10.400 10.600 9 12.400 7 13.800V8.300z" fill="#2f6fd0"/></svg>
<div class="t lk" style="left:465px;top:52px;;letter-spacing:0;transform:scaleX(0.987)">Change settings</div>
<div class="t " style="left:225.6px;top:73px;;letter-spacing:0;transform:scaleX(0.97)">Full computer name:</div>
<div class="t " style="left:376px;top:73px;">TS1.m</div>
<div style="left:403px;top:70px;width:14px;height:16px;background:#fff"></div>
<div class="t " style="left:419px;top:73px;">. &#39; l</div>
<div class="t " style="left:225.6px;top:94px;;letter-spacing:0;transform:scaleX(0.986)">Computer description:</div>
</div>
<div style="left:624px;top:49px;width:16px;height:108px;background-color:#eae8e4;background-image:conic-gradient(#fff 25%,#d6d3ce 0 50%,#fff 0 75%,#d6d3ce 0);background-size:2px 2px;"></div>
<div class="sbtn" style="left:624px;top:9px;width:16px;height:91px;"></div>
<div class="sbtn" style="left:624px;top:141px;width:16px;height:16px;">
<svg style="left:3px;top:5px" width="7" height="4" viewBox="0 0 7 4"><path d="M0 0h7L3.500 4z" fill="#000"/></svg>
</div>
</div>
<div style="left:240px;top:369px;width:700px;height:200px;background:#d6d3ce">
<div style="left:1px;top:1px;width:700px;height:1px;background:#fff"></div>
<div style="left:1px;top:1px;width:1px;height:200px;background:#fff"></div>
<div style="left:4px;top:4px;width:700px;height:18px;background:#08246b"></div>
<svg style="left:6px;top:5px" width="16" height="16" viewBox="0 0 16 16"><circle cx="6" cy="6" r="5.500" fill="#c8dce8" stroke="#90a8b8" stroke-width=".8"/><circle cx="5" cy="5" r="2.500" fill="#eef6fa"/><rect x="4.500" y="7.500" width="11" height="7" fill="#fffdf4" stroke="#b08848" stroke-width="1"/><path d="M6.500 10h6" stroke="#6080d0" stroke-width="1"/><circle cx="10.500" cy="13" r="2" fill="#f0a818"/><path d="M9.500 14.500l-.8 1.500M11.500 14.500l.8 1.500" stroke="#3870e0" stroke-width="1"/></svg>
<div class="t b w" style="left:23.19999999999999px;top:7px;;letter-spacing:0;transform:scaleX(1.057)">RD Licensing Manager</div>
<div class="t " style="left:10px;top:26px;;letter-spacing:0;transform:scaleX(0.987)"><u>A</u>ction</div>
<div class="t " style="left:52px;top:26px;;letter-spacing:0;transform:scaleX(0.93)"><u>V</u>iew</div>
<div class="t " style="left:85.80000000000001px;top:26px;;letter-spacing:0;transform:scaleX(0.945)"><u>H</u>elp</div>
<div style="left:4px;top:42px;width:700px;height:1px;background:#848284"></div>
<div style="left:4px;top:43px;width:700px;height:1px;background:#fff"></div>
<div class="btn" style="left:10px;top:47px;width:25px;height:22px;"></div>
<svg style="left:14px;top:50px" width="16" height="16" viewBox="0 0 16 16"><rect x="0" y="1" width="6" height="5" fill="#e8f0f8" stroke="#9098a8" stroke-width=".8"/><rect x="1" y="3" width="4" height="2" fill="#3890d8"/><path d="M7 3.500h5M8 5.500h3" stroke="#585858"/><rect x="3" y="9" width="6" height="5" fill="#e8f0f8" stroke="#9098a8" stroke-width=".8"/><rect x="4" y="10" width="2" height="3" fill="#d03030"/><rect x="6" y="10" width="2" height="3" fill="#30a030"/><path d="M10 11.500h5M11 13.500h3" stroke="#585858"/></svg>
<div class="btn" style="left:35px;top:47px;width:25px;height:22px;"></div>
<svg style="left:39px;top:50px" width="16" height="16" viewBox="0 0 16 16"><rect x="1" y="1" width="3" height="3" fill="#30a8a8" stroke="#b8c0c8" stroke-width=".6"/><path d="M6 2.500h4" stroke="#585858"/><rect x="7" y="6" width="3" height="3" fill="#d03018" stroke="#b8c0c8" stroke-width=".6"/><path d="M12 7.500h4" stroke="#585858"/><rect x="2" y="11" width="3" height="3" fill="#40b040" stroke="#b8c0c8" stroke-width=".6"/><path d="M7 12.500h4" stroke="#585858"/></svg>
<div class="btn" style="left:60px;top:47px;width:25px;height:22px;"></div>
<svg style="left:64px;top:50px" width="16" height="16" viewBox="0 0 16 16"><g stroke="#b8c0c8" stroke-width=".6"><rect x="1" y="1" width="3" height="3" fill="#30a8a8"/><rect x="9" y="1" width="3" height="3" fill="#3050c8"/><rect x="1" y="6" width="3" height="3" fill="#d03018"/><rect x="9" y="6" width="3" height="3" fill="#30a8a8"/><rect x="1" y="11" width="3" height="3" fill="#40b040"/><rect x="9" y="11" width="3" height="3" fill="#d03018"/></g><path d="M5.500 2.500h2M13.500 2.500h2M5.500 7.500h2M13.500 7.500h2M5.500 12.500h2M13.500 12.500h2" stroke="#585858"/></svg>
<div style="left:85px;top:47px;width:25px;height:22px;background-color:#eae8e4;background-image:conic-gradient(#fff 25%,#d6d3ce 0 50%,#fff 0 75%,#d6d3ce 0);background-size:2px 2px;border:1px solid;border-color:#424142 #fff #fff #424142;box-shadow:inset 1px 1px 0 #848284"></div>
<svg style="left:89px;top:50px" width="16" height="16" viewBox="0 0 16 16"><path d="M2 1.500h3M6 1.500h3M10 1.500h3" stroke="#585858"/><path d="M0 3.500h15" stroke="#1818b0" stroke-width="1.200"/><path d="M3 5.500h3M7 5.500h3M11 5.500h3M3 7.500h3M7 7.500h3M11 7.500h3M3 9.500h3M7 9.500h3M11 9.500h3M3 11.500h3M7 11.500h3M11 11.500h3M3 13.500h3M7 13.500h3M11 13.500h3" stroke="#585858"/><path d="M0 5.500h1M0 9.500h1" stroke="#30a8a8"/><path d="M0 7.500h1M0 11.500h1" stroke="#40b040"/><path d="M0 13.500h1" stroke="#d03018"/></svg>
<div style="left:116px;top:45px;width:1px;height:27px;background:#848284"></div>
<div style="left:117px;top:45px;width:1px;height:27px;background:#fff"></div>
<div class="sunk" style="left:4px;top:72px;width:154px;height:200px;background:#fff;overflow:hidden">
<div class="plus" style="left:8px;top:5px;width:9px;height:9px;"></div>
<div style="left:18px;top:9px;width:5px;height:1px;background:#848284"></div>
<div style="left:18px;top:9px;width:5px;height:1px;background:repeating-linear-gradient(90deg,#848284 0 1px,#fff 1px 2px)"></div>
<svg style="left:23px;top:1px" width="16" height="16" viewBox="0 0 16 16"><rect x=".5" y="2.500" width="5" height="12" fill="#c8d4e0" stroke="#78889c" stroke-width=".8"/><path d="M1.500 5h3M1.500 7h3" stroke="#586878"/><rect x="1.500" y="11" width="2" height="2" fill="#40c040"/><rect x="5" y="0" width="5" height="3" fill="#c8d4e0" stroke="#78889c" stroke-width=".8"/><rect x="5.500" y="4.500" width="10" height="7" fill="#fffdf4" stroke="#a88850" stroke-width="1"/><path d="M7.500 7h5" stroke="#6080d0"/><circle cx="11.500" cy="10.500" r="1.800" fill="#f0a818"/><rect x="9" y="12" width="6" height="3" fill="#90a8c0" stroke="#78889c" stroke-width=".6"/><rect x="10" y="13" width="2" height="2" fill="#40c040"/></svg>
<div style="left:42px;top:1px;width:54px;height:16px;background:#d6d3ce"></div>
<div class="t " style="left:44px;top:3px;;letter-spacing:0;transform:scaleX(0.978)">All servers</div>
</div>
<div class="sunk" style="left:161px;top:72px;width:600px;height:200px;background:#fff;overflow:hidden">
<div class="hd" style="left:1px;top:1px;width:125px;height:17px;"></div>
<div class="t " style="left:5.800000000000011px;top:4px;;letter-spacing:0;transform:scaleX(0.954)">Name</div>
<div class="hd" style="left:126px;top:1px;width:125px;height:17px;"></div>
<div class="t " style="left:131.79999999999995px;top:4px;;letter-spacing:0;transform:scaleX(0.991)">Activation Status</div>
<div class="hd" style="left:251px;top:1px;width:125px;height:17px;"></div>
<div class="t " style="left:255.5px;top:4px;;letter-spacing:0;transform:scaleX(0.981)">Discovery Scope</div>
<div class="hd" style="left:376px;top:1px;width:125px;height:17px;"></div>
<div class="t " style="left:381px;top:4px;;letter-spacing:0;transform:scaleX(1.016)">Configuration</div>
<svg style="left:5px;top:19px" width="16" height="16" viewBox="0 0 16 16"><rect x=".5" y=".5" width="15" height="10" fill="#fffdf8" stroke="#a89070" stroke-width="1"/><path d="M3 3.500h10M3 7.500h4" stroke="#8098e0"/><circle cx="11.200" cy="10.300" r="5" fill="#28a028" stroke="#187018" stroke-width=".6"/><path d="M8.700 10.500L10.500 12.700L13.700 7.500" fill="none" stroke="#fff" stroke-width="1.600"/></svg>
<div class="t " style="left:23px;top:21px;;letter-spacing:0;transform:scaleX(0.822)">TS1</div>
<div class="t " style="left:131.79999999999995px;top:21px;;letter-spacing:0;transform:scaleX(1.036)">Activated</div>
<div class="t " style="left:256px;top:21px;;letter-spacing:0;transform:scaleX(0.973)">Domain</div>
<div class="t " style="left:381.5px;top:21px;;letter-spacing:0;transform:scaleX(0.937)">OK</div>
</div>
</div>
</div>
</body>
</html>
